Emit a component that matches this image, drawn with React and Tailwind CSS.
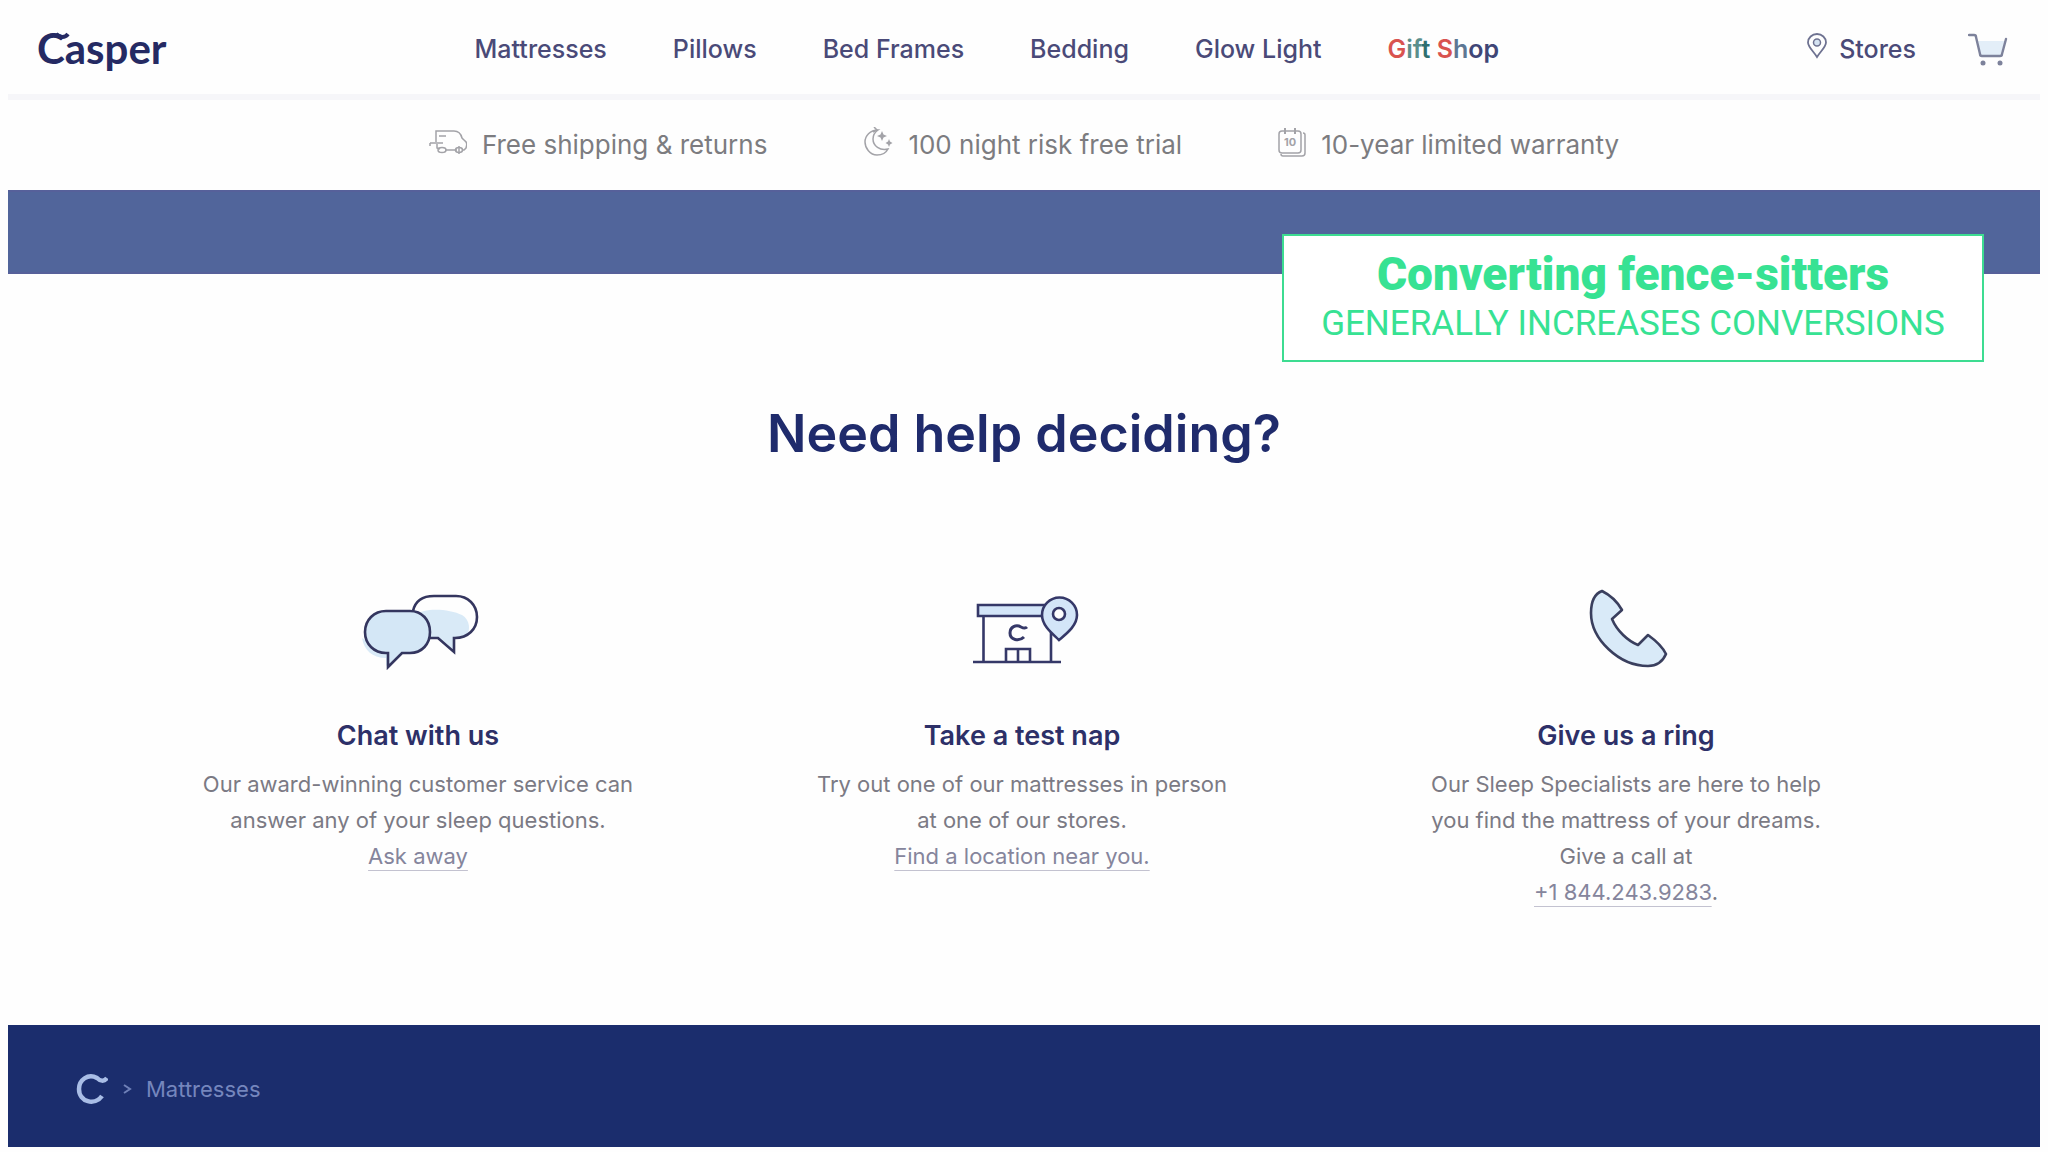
const NAV_ITEMS = ['Mattresses', 'Pillows', 'Bed Frames', 'Bedding', 'Glow Light'];

const TruckIcon = () => (
  <svg width="38" height="26" viewBox="0 0 38 26" fill="none" stroke="#a3a3a8" strokeWidth="1.5" aria-hidden="true">
    <path d="M7 13V2h18c4 0 7 3 8 7l3 3c2 1 2 4 1 7l-2 2h-2M11 20l-3-1v-4M16 21h12" />
    <path d="M1 14h13M1 14v3M10 7h7" />
    <ellipse cx="13" cy="21" rx="4" ry="2.500" />
    <ellipse cx="30" cy="21" rx="3.500" ry="2.500" />
    <path d="M30 17v8" />
  </svg>
);

const MoonIcon = () => (
  <svg width="30" height="30" viewBox="0 0 30 30" fill="none" stroke="#a3a3a8" strokeWidth="1.500" aria-hidden="true">
    <path d="M15 3C7 3 2 9 2 15s5 13 12 13c5 0 9-2 11-6-8 2-15-3-15-10 0-4 2-7 5-9z" />
    <path d="M11 0l3 3-4 2" />
    <path d="M19 4l1.500 3.500L24 9l-3.500 1.500L19 14l-1.500-3.500L14 9l3.500-1.500zM26 12l1 2.500 2.500 1.500-2.500 1.500-1 2.500-1-2.500-2.500-1.500 2.500-1.500z" fill="#a3a3a8" stroke="none" />
  </svg>
);

const CalendarIcon = () => (
  <svg width="28" height="30" viewBox="0 0 28 30" fill="none" stroke="#a3a3a8" strokeWidth="1.500" aria-hidden="true">
    <rect x="1" y="4" width="22" height="22" rx="3" />
    <path d="M25 6c1 0 2 1 2 2v18c0 2-1 3-3 3H5c-1 0-2-1-2-2" />
    <path d="M7 1v6M17 1v6" strokeWidth="2" />
    <text x="12" y="19" textAnchor="middle" fontFamily="Inter, sans-serif" fontSize="11" fontWeight="700" fill="#a3a3a8" stroke="none">10</text>
  </svg>
);

const PinIcon = () => (
  <svg width="20" height="26" viewBox="0 0 20 26" fill="none" stroke="#6e7291" strokeWidth="1.800" aria-hidden="true">
    <path d="M10 24C7 19 1 14 1 9.500a9 8.500 0 0 1 18 0C19 14 13 19 10 24z" />
    <circle cx="10" cy="9.500" r="3.500" fill="#d5e3f2" strokeWidth="1.500" />
  </svg>
);

const CartIcon = () => (
  <svg width="40" height="34" viewBox="0 0 40 34" fill="none" stroke="#7d829b" strokeWidth="2.400" aria-hidden="true">
    <path d="M10 8h27l-5 15H13z" fill="#e3eef8" stroke="none" />
    <path d="M1 2h5c1 0 2 1 2 2l4 17c0 1 1 2 2 2h18c1 0 2-1 2-2l4-15" strokeLinecap="round" strokeLinejoin="round" />
    <circle cx="15" cy="30" r="2.500" fill="#7d829b" stroke="none" />
    <circle cx="32" cy="30" r="2.500" fill="#7d829b" stroke="none" />
  </svg>
);

const ChatIcon = () => (
  <svg width="160" height="120" viewBox="-2 0 160 120" aria-hidden="true">
    <path d="M76 45c8-8 34-6 46 0 8 5 9 15 4 22l-12 2v12L99 69h-9z" fill="#d9eaf7" />
    <path d="M22 68c2 12 10 20 24 20v8l10-8" fill="#d9eaf7" />
    <path d="M73 41c2-9 9-15 21-15h22c12 0 21 9 21 21s-9 21-22 21h-1v14L98 68h-8" fill="none" stroke="#34365f" strokeWidth="2.600" />
    <path d="M46 41h24c12 0 20 9 20 21s-8 21-20 21h-8L48 97V83h-2c-12 0-21-9-21-21s9-21 21-21z" fill="#d4e7f6" stroke="#34365f" strokeWidth="2.600" />
  </svg>
);

const StoreIcon = () => (
  <svg width="160" height="120" viewBox="-8 0 160 120" fill="none" stroke="#353868" strokeWidth="2.600" aria-hidden="true">
    <path d="M28 35h70v11H28z" fill="#d3e5f8" />
    <path d="M33.500 46v46M101 62v30M23 92h88" />
    <path d="M56 92V79h24v13M68 79v13" />
    <path d="M77 57c-2 2-4 1-6 0-5-3-11 0-11 6 0 7 9 9 14 4" strokeWidth="3" />
    <path d="M109 70c-6-6-17-14-17-25a17 17 0 0 1 35 0c0 11-11 19-18 25z" fill="#d3e5f8" />
    <circle cx="109" cy="44" r="6" fill="#fefefe" />
  </svg>
);

const PhoneIcon = () => (
  <svg width="160" height="120" viewBox="-14 0 160 120" aria-hidden="true">
    <path
      d="M42 21c-8 3-11 12-11 22 0 26 28 53 57 53 9 0 15-5 18-12-4-8-11-14-18-19l-10 10c-10-4-21-14-26-26l10-9c-5-9-12-15-20-19z"
      fill="#d9eaf8" stroke="#3a3f5e" strokeWidth="2.600" strokeLinejoin="round"
    />
  </svg>
);

const CasperMark = () => (
  <svg width="32" height="32" viewBox="0 0 32 32" fill="none" stroke="#a9bde6" strokeWidth="4.500" aria-hidden="true">
    <path d="M31 5c-3 4-7 3-10 0-9-5-18 2-18 11 0 13 16 17 23 7" />
  </svg>
);

const PERKS = [
  { icon: TruckIcon, text: 'Free shipping & returns' },
  { icon: MoonIcon, text: '100 night risk free trial' },
  { icon: CalendarIcon, text: '10-year limited warranty' },
];

const HELP = [
  {
    icon: ChatIcon,
    title: 'Chat with us',
    lines: ['Our award-winning customer service can', 'answer any of your sleep questions.'],
    link: 'Ask away',
  },
  {
    icon: StoreIcon,
    title: 'Take a test nap',
    lines: ['Try out one of our mattresses in person', 'at one of our stores.'],
    link: 'Find a location near you.',
  },
  {
    icon: PhoneIcon,
    title: 'Give us a ring',
    lines: ['Our Sleep Specialists are here to help', 'you find the mattress of your dreams.', 'Give a call at'],
    link: '+1 844.243.9283',
    after: '.',
  },
];

const Header = () => (
  <header className="flex items-center justify-between border-b-[6px] border-[#f6f6f9] pl-[29px] pr-8 pt-1.5 h-[100px] text-[25px] font-medium text-[#4a4a78]">
    <a href="#" className="relative pb-1 font-['Lato',sans-serif] text-[42px] leading-none font-bold text-[#252a63]">
      Casper
      {/* Flick on the top of the C */}
      <svg className="absolute left-[18px] top-1" width="15" height="10" viewBox="0 0 15 10" fill="none" stroke="#252a63" strokeWidth="4" aria-hidden="true">
        <path d="M1 3c4 4 9 4 12 0" />
      </svg>
    </a>
    <nav className="flex items-center gap-[66px] whitespace-nowrap">
      {NAV_ITEMS.map(item => <a key={item} href="#">{item}</a>)}
      <a href="#" className="font-semibold">
        <span className="text-[#d9534f]">G</span>
        <span className="text-[#5b8f8c]">if</span>
        <span className="text-[#2f6f70]">t</span>{' '}
        <span className="text-[#d9534f]">S</span>
        <span className="text-[#5d7794]">h</span>
        <span className="text-[#3f4676]">op</span>
      </a>
    </nav>
    <div className="flex items-center gap-[52px]">
      <a href="#" className="flex items-center gap-3"><span className="pb-2"><PinIcon /></span>Stores</a>
      <button aria-label="Cart"><CartIcon /></button>
    </div>
  </header>
);

const HelpCard = ({ icon: Icon, title, lines, link, after }) => (
  <div className="flex flex-col items-center text-center">
    <Icon />
    <h3 className="mt-7 text-[27px] leading-9 font-semibold text-[#2d3068]">{title}</h3>
    <p className="mt-3 text-[22px] leading-9 text-[#7b7a84]">
      {lines.map(line => <span key={line} className="block">{line}</span>)}
      <a href="#" className="text-[#85859c] underline decoration-1 decoration-[#c3c2d0] underline-offset-[6px] [text-decoration-skip-ink:none]">{link}</a>
      {after}
    </p>
  </div>
);

export default function App() {
  return (
    <div className="relative min-h-screen bg-[#fefefe] px-2 pb-[5px] font-['Inter',sans-serif]">
      <Header />

      <ul className="flex h-[90px] items-center justify-center gap-24 pb-0.5 text-[26px] text-[#7c7c80]">
        {PERKS.map(({ icon: Icon, text }) => (
          <li key={text} className="flex items-center gap-[15px] whitespace-nowrap">
            <span className="pb-1"><Icon /></span>
            {text}
          </li>
        ))}
      </ul>

      <div className="h-[84px] border-y-2 border-[#56609a] bg-[#51659b]" />

      <main className="pt-32 pb-[115px]">
        <h2 className="text-center text-[52px] leading-[64px] font-semibold text-[#1f2b6c]">Need help deciding?</h2>
        <div className="mt-[104px] grid grid-cols-3 pl-27 pr-28">
          {HELP.map(item => <HelpCard key={item.title} {...item} />)}
        </div>
      </main>

      <footer className="flex h-[122px] items-center bg-[#1b2d6d] pl-[68px] pt-1.5 text-[22px] text-[#7586bd]">
        <a href="#" aria-label="Casper"><CasperMark /></a>
        <svg className="mx-3.5" width="10" height="12" viewBox="0 0 10 12" fill="none" stroke="#6f80b8" strokeWidth="2" aria-hidden="true">
          <path d="M2 2l6 4-6 4" />
        </svg>
        <a href="#">Mattresses</a>
      </footer>

      {/* Callout pinned over the banner */}
      <aside className="absolute right-16 top-[234px] h-[128px] w-[702px] border-2 border-[#3ddc91] bg-white pt-3.5 text-center font-['Roboto',sans-serif] text-[#37e293]">
        <p className="text-[46px] leading-[48px] font-black">Converting fence-sitters</p>
        <p className="mt-2 text-[35px] leading-9">GENERALLY INCREASES CONVERSIONS</p>
      </aside>
    </div>
  );
}
